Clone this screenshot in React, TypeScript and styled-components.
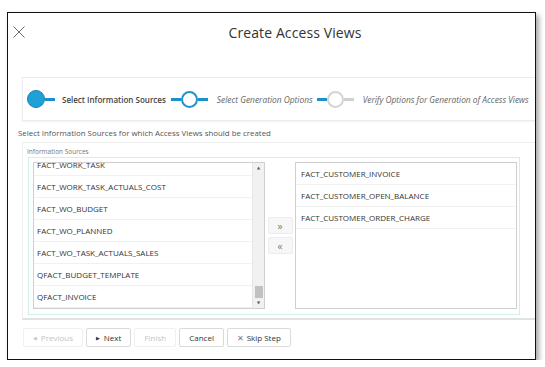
import React from 'react';
import styled, { createGlobalStyle } from 'styled-components';

const GlobalStyle = createGlobalStyle`
  body {
    margin: 0;
    background: #fff;
    font-family: "Open Sans", "DejaVu Sans", sans-serif;
    color: #333;
  }
`;

const sourceItems = [
  'FACT_WORK_ORDER',
  'FACT_WORK_TASK',
  'FACT_WORK_TASK_ACTUALS_COST',
  'FACT_WO_BUDGET',
  'FACT_WO_PLANNED',
  'FACT_WO_TASK_ACTUALS_SALES',
  'QFACT_BUDGET_TEMPLATE',
  'QFACT_INVOICE',
];

const selectedItems = [
  'FACT_CUSTOMER_INVOICE',
  'FACT_CUSTOMER_OPEN_BALANCE',
  'FACT_CUSTOMER_ORDER_CHARGE',
];

type StepState = 'done' | 'active' | 'todo';

const App: React.FC = () => {
  return (
    <>
      <GlobalStyle />
      <Frame>
        <Dialog>
          <Header>
            <CloseButton aria-label="close">
              <svg width="12" height="12" viewBox="0 0 12 12">
                <path d="M0.5 0.5 L11.5 11.5 M11.5 0.5 L0.5 11.5" stroke="#666" strokeWidth="1" fill="none" />
              </svg>
            </CloseButton>
            <Title>Create Access Views</Title>
            <span />
          </Header>

          <StepperCard>
            <Circle state="done" />
            <Connector />
            <StepLabel state="done">Select Information Sources</StepLabel>
            <Connector />
            <Circle state="active" />
            <Connector />
            <StepLabel state="active">Select Generation Options</StepLabel>
            <Connector />
            <Circle state="todo" />
            <Connector gray />
            <StepLabel state="todo">Verify Options for Generation of Access Views</StepLabel>
          </StepperCard>

          <Instruction>Select Information Sources for which Access Views should be created</Instruction>

          <Panel>
            <PanelLabel>Information Sources</PanelLabel>
            <Shuttle>
              <ListBox width={232}>
                <Rows>
                  {sourceItems.map((item) => (
                    <Row key={item} pad={3}>{item}</Row>
                  ))}
                </Rows>
                <ScrollTrack>
                  <ScrollArrow>▲</ScrollArrow>
                  <ScrollSpace />
                  <ScrollThumb />
                  <ScrollArrow>▼</ScrollArrow>
                </ScrollTrack>
              </ListBox>
              <MoveColumn>
                <MoveButton>»</MoveButton>
                <MoveButton>«</MoveButton>
              </MoveColumn>
              <ListBox width={222}>
                <Rows top>
                  {selectedItems.map((item) => (
                    <Row key={item} pad={5}>{item}</Row>
                  ))}
                </Rows>
              </ListBox>
            </Shuttle>
          </Panel>

          <Footer>
            <FooterButton disabled>
              <Glyph>◀</Glyph>Previous
            </FooterButton>
            <FooterButton>
              <Glyph dark>▶</Glyph>Next
            </FooterButton>
            <FooterButton disabled>Finish</FooterButton>
            <FooterButton>Cancel</FooterButton>
            <FooterButton>
              <XGlyph>✕</XGlyph>Skip Step
            </FooterButton>
          </Footer>
        </Dialog>
      </Frame>
    </>
  );
};

export default App;

// Styled Components
const Frame = styled.div`
  margin: 12px 0 0 7px;
  width: 529px;
  height: 348px;
  box-sizing: border-box;
  border: 1px solid #111;
  box-shadow: 3px 3px 5px rgba(0, 0, 0, 0.35);
  overflow: hidden;
  background: #fff;
`;

const Dialog = styled.div`
  width: 574px;
  display: flex;
  flex-direction: column;
`;

const Header = styled.div`
  height: 38px;
  display: grid;
  grid-template-columns: 1fr auto 1fr;
  align-items: center;
`;

const CloseButton = styled.div`
  display: flex;
  align-items: center;
  margin-left: 5px;
  width: 12px;
  height: 12px;
`;

const Title = styled.div`
  font-size: 14px;
  color: #333;
  letter-spacing: 0.1px;
`;

const StepperCard = styled.div`
  margin: 26px 0 0 14px;
  height: 44px;
  box-sizing: border-box;
  border: 1px solid #ececec;
  box-shadow: 0 1px 2px rgba(0, 0, 0, 0.06);
  display: flex;
  align-items: center;
  padding-left: 4px;
  white-space: nowrap;
`;

const Circle = styled.div<{ state: StepState }>`
  flex: none;
  box-sizing: border-box;
  width: ${({ state }) => (state === 'done' ? '18px' : '17px')};
  height: ${({ state }) => (state === 'done' ? '18px' : '17px')};
  border-radius: 50%;
  border: ${({ state }) =>
    state === 'done' ? '1px solid #1683b8' : state === 'active' ? '2px solid #1d93cf' : '2px solid #d4d4d4'};
  background: ${({ state }) => (state === 'done' ? '#1fa0d6' : '#fff')};
`;

const Connector = styled.div<{ gray?: boolean }>`
  flex: none;
  width: 10px;
  height: 3px;
  background: ${({ gray }) => (gray ? '#d0d0d0' : '#1d8fca')};
`;

const StepLabel = styled.span<{ state: StepState }>`
  font-size: ${({ state }) => (state === 'done' ? '8px' : '8.4px')};
  margin: ${({ state }) => (state === 'done' ? '0 5px 0 7px' : '0 4px 0 9px')};
  font-weight: ${({ state }) => (state === 'done' ? 600 : 400)};
  font-style: ${({ state }) => (state === 'done' ? 'normal' : 'italic')};
  color: ${({ state }) => (state === 'done' ? '#444' : '#666')};
`;

const Instruction = styled.div`
  margin: 6px 0 0 10px;
  font-size: 7.9px;
  line-height: 12px;
  color: #555;
`;

const Panel = styled.div`
  margin: 3px 0 0 14px;
  border: 1px solid #efefef;
  border-bottom: 2px solid #e2e2e2;
  padding: 4px 0 3px 5px;
`;

const PanelLabel = styled.div`
  font-size: 6.5px;
  line-height: 10px;
  color: #777;
  margin-left: -1px;
`;

const Shuttle = styled.div`
  width: 492px;
  height: 158px;
  box-sizing: border-box;
  border: 1px solid #d3f1e3;
  padding: 4px 2px 5px 4px;
  display: flex;
`;

const ListBox = styled.div<{ width: number }>`
  width: ${({ width }) => width}px;
  box-sizing: border-box;
  border: 1px solid #cfcfcf;
  display: flex;
  overflow: hidden;
  background: #fff;
`;

const Rows = styled.div<{ top?: boolean }>`
  flex: 1;
  min-width: 0;
  display: flex;
  flex-direction: column;
  justify-content: ${({ top }) => (top ? 'flex-start' : 'flex-end')};
  overflow: hidden;
`;

const Row = styled.div<{ pad: number }>`
  flex: none;
  height: 22px;
  box-sizing: border-box;
  padding-left: ${({ pad }) => pad}px;
  display: flex;
  align-items: center;
  font-size: 8px;
  color: #333;
  border-bottom: 1px solid #f1f1f1;
  white-space: nowrap;
`;

const ScrollTrack = styled.div`
  flex: none;
  width: 11px;
  background: #f1f1f1;
  border-left: 1px solid #e6e6e6;
  display: flex;
  flex-direction: column;
  align-items: center;
`;

const ScrollArrow = styled.div`
  height: 10px;
  font-size: 4px;
  line-height: 10px;
  color: #555;
`;

const ScrollSpace = styled.div`
  flex: 1;
`;

const ScrollThumb = styled.div`
  width: 8px;
  height: 12px;
  background: #c1c1c1;
`;

const MoveColumn = styled.div`
  width: 30px;
  display: flex;
  flex-direction: column;
  align-items: center;
  justify-content: center;
  gap: 3px;
`;

const MoveButton = styled.div`
  width: 25px;
  height: 17px;
  box-sizing: border-box;
  border: 1px solid #ececec;
  background: #f7f7f7;
  border-radius: 2px;
  display: flex;
  align-items: center;
  justify-content: center;
  font-size: 10px;
  line-height: 10px;
  color: #7a7a7a;
`;

const Footer = styled.div`
  margin: 8px 0 0 15px;
  display: flex;
  gap: 3px;
`;

const FooterButton = styled.div<{ disabled?: boolean }>`
  height: 19px;
  box-sizing: border-box;
  padding: 0 9px;
  border: 1px solid ${({ disabled }) => (disabled ? '#f0f0f0' : '#dadada')};
  border-radius: 2px;
  display: flex;
  align-items: center;
  font-size: 8px;
  color: ${({ disabled }) => (disabled ? '#c4c4c4' : '#333')};
  background: #fff;
`;

const Glyph = styled.span<{ dark?: boolean }>`
  font-size: 5px;
  margin-right: 4px;
  color: ${({ dark }) => (dark ? '#333' : '#c4c4c4')};
`;

const XGlyph = styled.span`
  font-size: 8px;
  margin-right: 3px;
  color: #777;
`;
